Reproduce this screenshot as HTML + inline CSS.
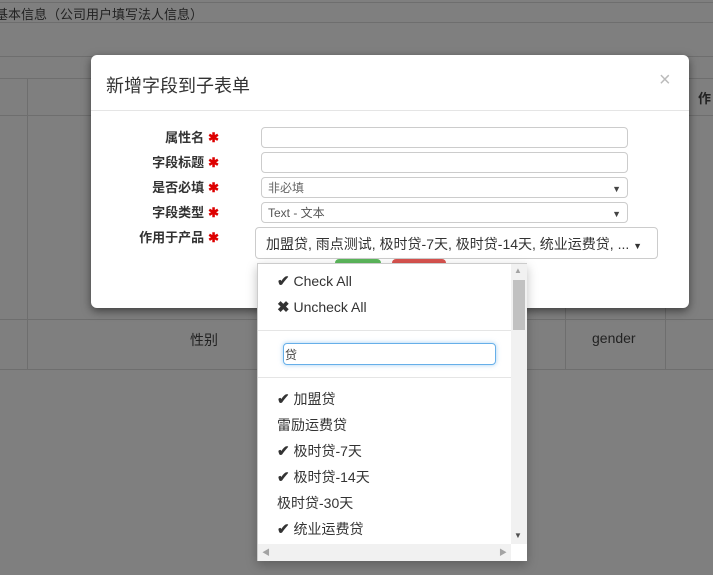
<!DOCTYPE html>
<html><head><meta charset="utf-8"><style>
*{box-sizing:border-box;margin:0;padding:0}
body{width:713px;height:575px;overflow:hidden;background:#7f7f7f;position:relative;font-family:"Liberation Sans","Noto Sans CJK SC",sans-serif;color:#333}
.abs{position:absolute}
.hl{position:absolute;left:0;width:713px;height:1px;background:#6e6e6e}
.vl{position:absolute;width:1px;background:#6e6e6e}
.modal{left:91px;top:55px;width:598px;height:253px;background:#fff;border-radius:6px;box-shadow:0 3px 9px rgba(0,0,0,.5)}
.lab{position:absolute;right:470px;font-weight:bold;font-size:13px;color:#333;text-align:right;white-space:nowrap}
.lab span{color:#d00;margin-left:4px}
.inp{position:absolute;left:170px;width:367px;height:21px;border:1px solid #ccc;border-radius:4px;background:#fff;font-size:12px;color:#555;padding:2px 6px;line-height:16px}
.arr{position:absolute;right:6px;top:3px;font-size:9px;color:#444}
.dd{left:257px;top:263px;width:270px;height:298px;background:#fff;border:1px solid #ccc;box-shadow:0 4px 10px rgba(0,0,0,.25)}
.it{position:absolute;left:19px;font-size:14px;color:#333;white-space:nowrap}
.ck{font-weight:bold;font-size:15px}
</style></head><body>
<div class="hl" style="top:2px"></div>
<div class="hl" style="top:22px"></div>
<div class="hl" style="top:56px"></div>
<div class="hl" style="top:78px"></div>
<div class="hl" style="top:115px"></div>
<div class="hl" style="top:319px"></div>
<div class="hl" style="top:369px"></div>
<div class="vl" style="left:27px;top:78px;height:291px"></div>
<div class="vl" style="left:565px;top:78px;height:291px"></div>
<div class="vl" style="left:665px;top:78px;height:291px"></div>
<div class="abs" style="left:-5px;top:4px;font-size:13px;color:#222">基本信息（公司用户填写法人信息）</div>
<div class="abs" style="left:698px;top:88px;font-size:13px;font-weight:bold;color:#222">作</div>
<div class="abs" style="left:190px;top:330px;font-size:14px;color:#222">性别</div>
<div class="abs" style="left:592px;top:330px;font-size:14px;color:#222">gender</div>

<div class="abs modal">
 <div class="abs" style="left:15px;top:17px;font-size:18px;color:#333">新增字段到子表单</div>
 <div class="abs" style="left:568px;top:14px;font-size:20px;color:#bbb">×</div>
 <div class="abs" style="left:0;top:55px;width:598px;height:1px;background:#e5e5e5"></div>
 <div class="lab" style="top:72px">属性名<span>✱</span></div>
 <div class="lab" style="top:97px">字段标题<span>✱</span></div>
 <div class="lab" style="top:122px">是否必填<span>✱</span></div>
 <div class="lab" style="top:147px">字段类型<span>✱</span></div>
 <div class="lab" style="top:172px">作用于产品<span>✱</span></div>
 <div class="inp" style="top:72px"></div>
 <div class="inp" style="top:97px"></div>
 <div class="inp" style="top:122px;color:#666">非必填<span class="arr">▼</span></div>
 <div class="inp" style="top:147px">Text - 文本<span class="arr">▼</span></div>
 <div class="abs" style="left:164px;top:172px;width:403px;height:32px;border:1px solid #ccc;border-radius:4px;font-size:14px;color:#333;padding:6px 10px;white-space:nowrap">加盟贷, 雨点测试, 极时贷-7天, 极时贷-14天, 统业运费贷, ... <span style="font-size:9px">▼</span></div>
 <div class="abs" style="left:244px;top:204px;width:46px;height:8px;background:#5cb85c;border-radius:4px 4px 0 0"></div>
 <div class="abs" style="left:301px;top:204px;width:54px;height:8px;background:#d9534f;border-radius:4px 4px 0 0"></div>
</div>

<div class="abs dd">
 <div class="it" style="top:8px"><span class="ck">✔</span> Check All</div>
 <div class="it" style="top:34px"><span class="ck">✖</span> Uncheck All</div>
 <div class="abs" style="left:0;top:66px;width:253px;height:1px;background:#e5e5e5"></div>
 <div class="abs" style="left:25px;top:79px;width:213px;height:22px;border:1px solid #66afe9;border-radius:4px;box-shadow:0 0 5px rgba(102,175,233,.6);font-size:12px;padding:2px 1px;color:#444">贷</div>
 <div class="abs" style="left:0;top:113px;width:253px;height:1px;background:#e5e5e5"></div>
 <div class="it" style="top:125px"><span class="ck">✔</span> 加盟贷</div>
 <div class="it" style="top:151px">雷励运费贷</div>
 <div class="it" style="top:177px"><span class="ck">✔</span> 极时贷-7天</div>
 <div class="it" style="top:203px"><span class="ck">✔</span> 极时贷-14天</div>
 <div class="it" style="top:229px">极时贷-30天</div>
 <div class="it" style="top:255px"><span class="ck">✔</span> 统业运费贷</div>
 <div class="abs" style="left:253px;top:0;width:16px;height:280px;background:#f1f1f1"></div>
 <div class="abs" style="left:255px;top:16px;width:12px;height:50px;background:#c1c1c1"></div>
 <div class="abs" style="left:256px;top:2px;font-size:8px;color:#a3a3a3">▲</div>
 <div class="abs" style="left:256px;top:267px;font-size:8px;color:#505050">▼</div>
 <div class="abs" style="left:0;top:280px;width:253px;height:17px;background:#f1f1f1"></div>
 <div class="abs" style="left:253px;top:280px;width:16px;height:17px;background:#fff"></div>
 <div class="abs" style="left:4px;top:283px;font-size:8px;color:#a3a3a3">◀</div>
 <div class="abs" style="left:241px;top:283px;font-size:8px;color:#a3a3a3">▶</div>
</div>
</body></html>
